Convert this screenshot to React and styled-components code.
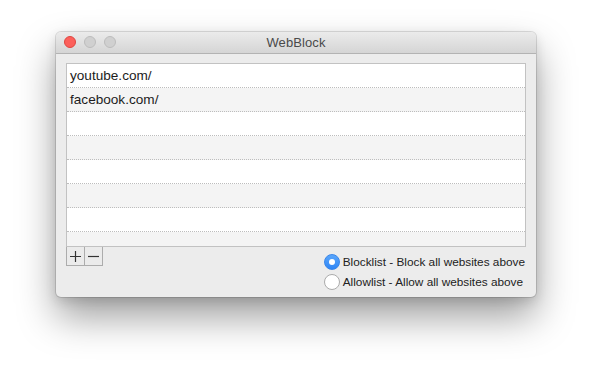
import React, { useState } from "react";
import styled, { createGlobalStyle } from "styled-components";

const GlobalStyle = createGlobalStyle`
  html, body {
    margin: 0;
    padding: 0;
    background: #ffffff;
    font-family: "Liberation Sans", Arial, sans-serif;
  }
`;

const Desktop = styled.div`
  width: 592px;
  height: 377px;
  padding: 32px 0 0 56px;
  box-sizing: border-box;
`;

const Window = styled.div`
  width: 480px;
  height: 265px;
  background: #ececec;
  border-radius: 5px;
  overflow: hidden;
  display: flex;
  flex-direction: column;
  box-shadow: 0 0 0 1px rgba(0, 0, 0, 0.12), 0 20px 38px rgba(0, 0, 0, 0.38),
    0 4px 12px rgba(0, 0, 0, 0.12);
`;

const TitleBar = styled.div`
  position: relative;
  height: 21px;
  flex: none;
  display: flex;
  align-items: center;
  justify-content: center;
  background: linear-gradient(#ebebeb, #d5d5d5);
  border-bottom: 1px solid #b3b3b3;
`;

const Lights = styled.div`
  position: absolute;
  left: 8px;
  top: 4px;
  display: flex;
  gap: 8px;
`;

const Light = styled.span`
  width: 12px;
  height: 12px;
  border-radius: 50%;
  box-sizing: border-box;
  background: ${(p) => (p.$red ? "#fc605b" : "#d0d0d0")};
  border: 1px solid ${(p) => (p.$red ? "#de4640" : "#bcbcbc")};
`;

const Title = styled.div`
  font-size: 13px;
  color: #4a4a4a;
  letter-spacing: 0.1px;
`;

const Content = styled.div`
  padding: 9px 10px 0 10px;
  display: flex;
  flex-direction: column;
`;

const Table = styled.div`
  height: 182px;
  border: 1px solid #c2c2c2;
  overflow: hidden;
  background: #ffffff;
`;

const Row = styled.div`
  height: 23px;
  border-bottom: 1px dotted #bdbdbd;
  background: ${(p) => (p.$odd ? "#f4f4f4" : "#ffffff")};
  display: flex;
  align-items: center;
  padding-left: 3px;
  font-size: 13.6px;
  color: #1c1c1c;
`;

const Footer = styled.div`
  display: flex;
  justify-content: space-between;
  align-items: flex-start;
`;

const ButtonGroup = styled.div`
  display: flex;
`;

const SquareButton = styled.button`
  width: 19px;
  height: 19px;
  padding: 0;
  margin: 0 0 0 ${(p) => (p.$joined ? "-1px" : "0")};
  border: 1px solid #acacac;
  border-top: none;
  background: #ebebeb;
  display: flex;
  align-items: center;
  justify-content: center;
  cursor: pointer;
`;

const RadioGroup = styled.div`
  display: flex;
  flex-direction: column;
  gap: 4px;
  padding-top: 7px;
  margin-right: 1px;
`;

const RadioRow = styled.label`
  display: flex;
  align-items: center;
  gap: 3px;
  font-size: 11.8px;
  color: #222;
  height: 16px;
  cursor: pointer;
`;

const RadioDot = styled.span`
  width: 16px;
  height: 16px;
  border-radius: 50%;
  box-sizing: border-box;
  display: flex;
  align-items: center;
  justify-content: center;
  background: ${(p) =>
    p.$on ? "linear-gradient(#5aa6fb, #2f86f6)" : "#ffffff"};
  border: 1px solid ${(p) => (p.$on ? "#3a86e8" : "#ababab")};
  &::after {
    content: "";
    width: 6px;
    height: 6px;
    border-radius: 50%;
    background: #ffffff;
    display: ${(p) => (p.$on ? "block" : "none")};
  }
`;

const sites = ["youtube.com/", "facebook.com/", "", "", "", "", "", ""];

export default function App() {
  const [mode, setMode] = useState("block");

  return (
    <>
      <GlobalStyle />
      <Desktop>
        <Window>
          <TitleBar>
            <Lights>
              <Light $red />
              <Light />
              <Light />
            </Lights>
            <Title>WebBlock</Title>
          </TitleBar>
          <Content>
            <Table>
              {sites.map((s, i) => (
                <Row key={i} $odd={i % 2 === 1}>
                  {s}
                </Row>
              ))}
            </Table>
            <Footer>
              <ButtonGroup>
                <SquareButton aria-label="Add">
                  <svg width="11" height="11" viewBox="0 0 11 11">
                    <path d="M5.5 0v11M0 5.5h11" stroke="#333" strokeWidth="1.2" />
                  </svg>
                </SquareButton>
                <SquareButton $joined aria-label="Remove">
                  <svg width="11" height="11" viewBox="0 0 11 11">
                    <path d="M0 5.5h11" stroke="#333" strokeWidth="1.2" />
                  </svg>
                </SquareButton>
              </ButtonGroup>
              <RadioGroup>
                <RadioRow onClick={() => setMode("block")}>
                  <RadioDot $on={mode === "block"} />
                  Blocklist - Block all websites above
                </RadioRow>
                <RadioRow onClick={() => setMode("allow")}>
                  <RadioDot $on={mode === "allow"} />
                  Allowlist - Allow all websites above
                </RadioRow>
              </RadioGroup>
            </Footer>
          </Content>
        </Window>
      </Desktop>
    </>
  );
}
